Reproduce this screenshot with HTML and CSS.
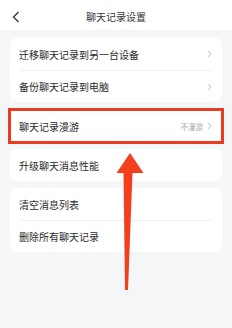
FILE: index.html
```html
<!DOCTYPE html>
<html lang="zh">
<head>
    <meta charset="UTF-8">
    <meta name="viewport" content="width=device-width, initial-scale=1.0">
    <title>聊天记录设置</title>
    <link rel="stylesheet" href="styles.css">
</head>
<body>
    <div class="header">
        <svg class="back" width="8" height="12" viewBox="0 0 8 12">
            <path d="M6.5 1 L1.5 6 L6.5 11" fill="none" stroke="#333" stroke-width="1.3"/>
        </svg>
        <div class="title">聊天记录设置</div>
    </div>

    <div class="page">
        <div class="card">
            <div class="row">
                <span class="label">迁移聊天记录到另一台设备</span>
                <svg class="chev" width="5" height="8" viewBox="0 0 5 8"><path d="M1 0.8 L4 4 L1 7.2" fill="none" stroke="#b8b8b8" stroke-width="0.9"/></svg>
            </div>
            <div class="row">
                <span class="label">备份聊天记录到电脑</span>
                <svg class="chev" width="5" height="8" viewBox="0 0 5 8"><path d="M1 0.8 L4 4 L1 7.2" fill="none" stroke="#b8b8b8" stroke-width="0.9"/></svg>
            </div>
        </div>

        <div class="card marked">
            <div class="row">
                <span class="label">聊天记录漫游</span>
                <span class="value">不漫游</span>
                <svg class="chev" width="5" height="8" viewBox="0 0 5 8"><path d="M1 0.8 L4 4 L1 7.2" fill="none" stroke="#b8b8b8" stroke-width="0.9"/></svg>
            </div>
        </div>

        <div class="card">
            <div class="row">
                <span class="label">升级聊天消息性能</span>
            </div>
        </div>

        <div class="card">
            <div class="row">
                <span class="label">清空消息列表</span>
            </div>
            <div class="row">
                <span class="label">删除所有聊天记录</span>
            </div>
        </div>
    </div>

    <svg class="arrow" width="232" height="328" viewBox="0 0 232 328">
        <polygon points="130,153 143.5,173 132.5,173 128,290 125,290 123.5,173 116.5,173" fill="#f2401f"/>
    </svg>
</body>
</html>
```

FILE: styles.css
```css
* {
    box-sizing: border-box;
}

body {
    margin: 0;
    width: 232px;
    height: 328px;
    overflow: hidden;
    position: relative;
    background-color: #f5f6f8;
    font-family: "Noto Sans CJK SC", "Noto Sans", sans-serif;
    color: #2a2a2a;
}

.header {
    height: 30px;
    background-color: #fff;
    display: flex;
    align-items: center;
    justify-content: center;
    position: relative;
}

.back {
    position: absolute;
    left: 12px;
    top: 11px;
}

.title {
    font-size: 10px;
    color: #333;
    margin-top: 2px;
}

.page {
    padding: 8px 10px;
    display: flex;
    flex-direction: column;
    gap: 7px;
}

.card {
    background-color: #fff;
    border-radius: 6px;
    padding: 0 10px 0 9px;
}

.card.marked {
    margin-top: 1px;
    outline: 3px solid #ec3b20;
    outline-offset: -1px;
    border-radius: 0;
}

.row {
    height: 32px;
    display: flex;
    align-items: center;
    font-size: 10px;
}

.row + .row {
    border-top: 1px solid #f0f0f0;
}

.label {
    flex: 1;
}

.value {
    font-size: 7.5px;
    color: #aaa;
    margin-right: 4px;
}

.chev {
    display: block;
}

.arrow {
    position: absolute;
    left: 0;
    top: 0;
}
```
